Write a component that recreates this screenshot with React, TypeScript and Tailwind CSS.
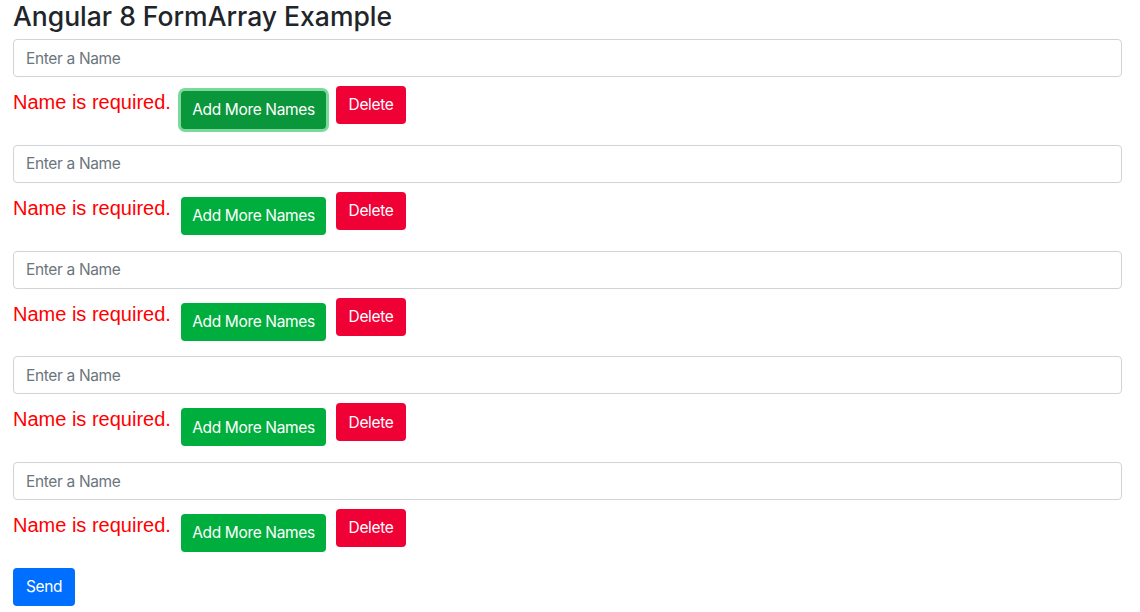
import React from "react";

function Group({ focused }: { focused?: boolean }) {
  return (
    <div className="mb-[15.75px]">
      <input
        placeholder="Enter a Name"
        className="block h-[38px] w-full rounded-[4px] border border-[#ced4da] bg-white px-[12px] text-[15.5px] tracking-[-0.35px] text-[#495057] placeholder:text-[#6c757d] outline-none"
      />
      <div className="flex items-start">
        <div className="mt-[12px] w-[168px] shrink-0 font-['Liberation_Sans',Arial,sans-serif] text-[20px] leading-[27px] text-[#ff0000]">
          Name is required.
        </div>
        <button
          className={
            focused
              ? "mt-[14px] h-[38px] w-[145px] rounded-[4px] bg-[#0a963a] text-[15.5px] tracking-[-0.35px] text-white ring-[3px] ring-[#7dd89c]"
              : "mt-[14px] h-[38px] w-[145px] rounded-[4px] bg-[#00ae3d] text-[15.5px] tracking-[-0.35px] text-white"
          }
        >
          Add More Names
        </button>
        <button className="ml-[10px] mt-[9px] h-[38px] w-[70px] rounded-[4px] bg-[#ef0035] text-[15.5px] tracking-[-0.35px] text-white">
          Delete
        </button>
      </div>
    </div>
  );
}

export default function App() {
  return (
    <div className="min-h-[612px] bg-white pl-[13px] pr-[18px] font-['Inter',sans-serif] text-[#212529]">
      <h3 className="h-[39px] text-[26.5px] font-medium leading-[32px]">
        Angular 8 FormArray Example
      </h3>
      <Group focused />
      <Group />
      <Group />
      <Group />
      <Group />
      <button className="h-[38px] w-[62px] rounded-[4px] bg-[#006eff] text-[15.5px] tracking-[-0.35px] text-white">
        Send
      </button>
    </div>
  );
}
